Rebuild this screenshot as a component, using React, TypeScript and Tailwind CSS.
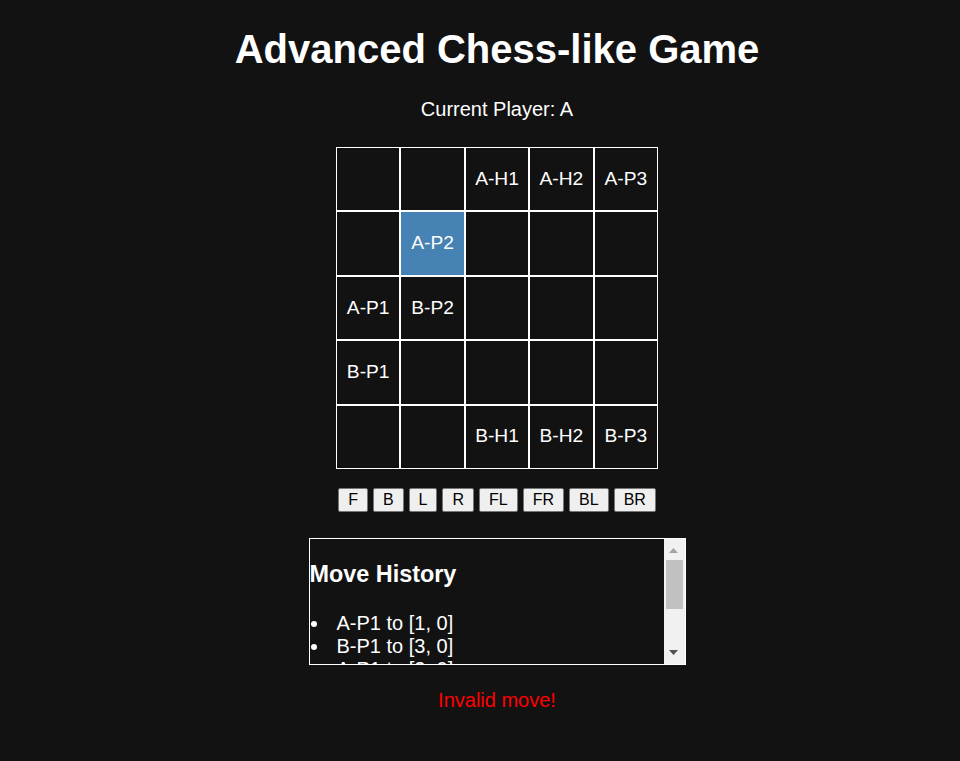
import { useState } from "react";

type Piece = { id: string } | null;

// 初期配置 + 6手進めた後の盤面
const initialBoard: Piece[][] = [
    [null, null, { id: "A-H1" }, { id: "A-H2" }, { id: "A-P3" }],
    [null, { id: "A-P2" }, null, null, null],
    [{ id: "A-P1" }, { id: "B-P2" }, null, null, null],
    [{ id: "B-P1" }, null, null, null, null],
    [null, null, { id: "B-H1" }, { id: "B-H2" }, { id: "B-P3" }],
];

const moves = ["F", "B", "L", "R", "FL", "FR", "BL", "BR"];

const initialHistory = [
    "A-P1 to [1, 0]",
    "B-P1 to [3, 0]",
    "A-P1 to [2, 0]",
    "B-P2 to [3, 1]",
    "A-P2 to [1, 1]",
    "B-P2 to [2, 1]",
];

// 履歴欄のスクロールバー（クラシック表示）
const ScrollBar = () => (
    <div className="w-[21px] shrink-0 bg-[#f1f1f1] flex flex-col">
        <div className="h-[21px] flex justify-center pt-[9px] pr-[2px]">
            <svg width="9" height="5" viewBox="0 0 9 5">
                <polygon points="4.5,0 9,5 0,5" fill="#a3a3a3" />
            </svg>
        </div>
        <div className="flex-1">
            <div className="ml-[2px] w-[17px] h-[49px] bg-[#c1c1c1]" />
        </div>
        <div className="h-[20px] flex justify-center pt-[6px] pr-[2px]">
            <svg width="9" height="5" viewBox="0 0 9 5">
                <polygon points="0,0 9,0 4.5,5" fill="#505050" />
            </svg>
        </div>
    </div>
);

export default function App() {
    const [board] = useState(initialBoard);
    const [selected, setSelected] = useState<[number, number] | null>([1, 1]);
    const [history] = useState(initialHistory);
    const [error, setError] = useState("Invalid move!");

    return (
        <div className="min-h-screen bg-[#121212] text-white font-['Liberation_Sans',Arial,sans-serif] text-[20px]">
            <div className="flex flex-col items-center pl-[34px]">
                <h1 className="mt-[26px] text-[40px] leading-[46px] font-bold">Advanced Chess-like Game</h1>
                <p className="mt-[26px] leading-[23px]">Current Player: A</p>

                {/* 盤面 5x5 */}
                <div className="mt-[26px] grid grid-cols-5 w-[322px]">
                    {board.map((row, r) =>
                        row.map((cell, c) => {
                            const isSel = selected?.[0] === r && selected?.[1] === c;
                            return (
                                <div
                                    key={`${r}-${c}`}
                                    onClick={() => setSelected([r, c])}
                                    className={`h-[64.4px] border border-white flex items-center justify-center text-[19.2px] cursor-pointer ${
                                        isSel ? "bg-[#4682b4]" : "bg-[#121212]"
                                    }`}
                                >
                                    {cell?.id}
                                </div>
                            );
                        })
                    )}
                </div>

                {/* 移動方向ボタン */}
                <div className="mt-[19px] flex gap-[5px]">
                    {moves.map((m) => (
                        <button
                            key={m}
                            onClick={() => setError("Invalid move!")}
                            className="h-[24px] px-[9px] text-[16px] leading-[18px] text-black bg-[#efefef] border border-[#767676] rounded-[2px]"
                        >
                            {m}
                        </button>
                    ))}
                </div>

                {/* 履歴 */}
                <div className="mt-[26px] w-[377px] h-[127px] border border-white flex">
                    <div className="flex-1 overflow-y-auto [scrollbar-width:none]">
                        <h3 className="mt-[22px] mb-[24px] text-[23.4px] leading-[27px] font-bold">Move History</h3>
                        <ul className="mb-[20px]">
                            {history.map((h, i) => (
                                <li key={i} className="flex items-center leading-[23px]">
                                    <span className="w-[27px] flex">
                                        <span className="ml-[1px] mt-[2px] w-[6px] h-[6px] rounded-full bg-white" />
                                    </span>
                                    {h}
                                </li>
                            ))}
                        </ul>
                    </div>
                    <ScrollBar />
                </div>

                {error && <p className="mt-[24px] leading-[23px] text-[#ff0000]">{error}</p>}
            </div>
        </div>
    );
}
